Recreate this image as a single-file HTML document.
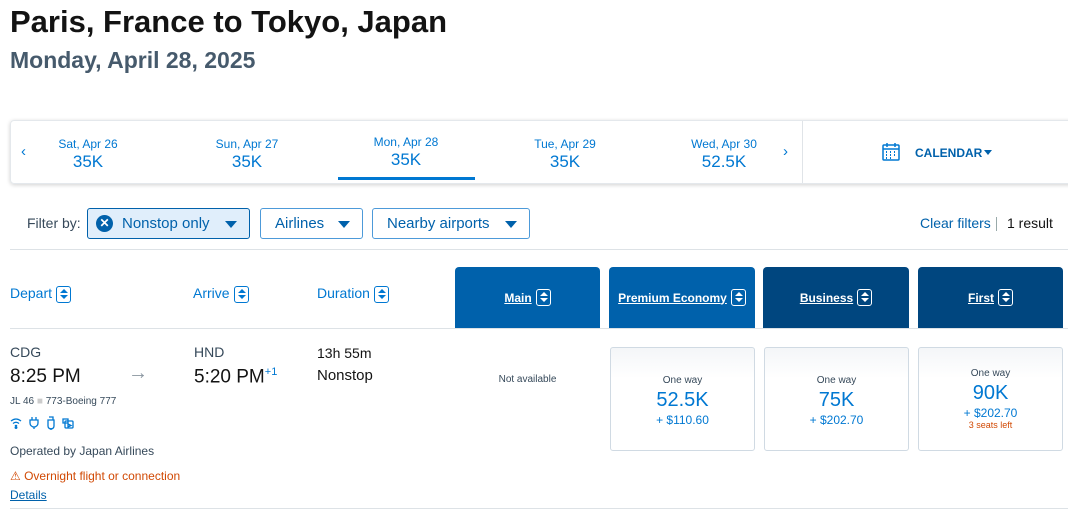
<!DOCTYPE html>
<html><head><style>
*{margin:0;padding:0;box-sizing:border-box}
body{width:1068px;height:513px;overflow:hidden;background:#fff;font-family:"Liberation Sans",sans-serif;position:relative;color:#36495a}
.a{position:absolute}
.blue{color:#0078d2}
.c{text-align:center}
.sort{display:inline-block;width:15px;height:17px;border:1.5px solid #0078d2;border-radius:3px;vertical-align:middle;position:relative;margin-left:4px}
.sort:before{content:"";position:absolute;left:3px;top:2px;border:4px solid transparent;border-bottom:4px solid #0078d2;border-top:0}
.sort:after{content:"";position:absolute;left:3px;top:8px;border:4px solid transparent;border-top:4px solid #0078d2;border-bottom:0}
.sw{border-color:#fff}.sw:before{border-bottom-color:#fff}.sw:after{border-top-color:#fff}
.cab{position:absolute;top:267px;height:61px;border-radius:4px 4px 0 0;color:#fff;font-weight:bold;font-size:12px;text-decoration:underline;display:flex;align-items:center;justify-content:center}
.card{position:absolute;top:347px;height:104px;width:145px;border:1px solid #d0dae3;border-radius:3px;background:linear-gradient(#f4f6f8,#fff 30%);text-align:center}
.card .o{font-size:10px;margin-top:27px}
.card .pr{font-size:20px;margin-top:3px;line-height:22px}
.card .f{font-size:12px;margin-top:2px}
.fb{position:absolute;top:208px;height:31px;border:1px solid #4d9ad9;border-radius:3px;font-size:15px;color:#0061ab;display:flex;align-items:center;padding-left:14px}
.tri{position:absolute;right:12px;top:12px;border:6px solid transparent;border-top:7px solid #0061ab;border-bottom:0}
.d{position:absolute;top:137px;width:150px;text-align:center;color:#0078d2}
.d .s{font-size:12px}.d .p{font-size:17px;margin-top:1px}
</style></head><body>
<div class="a" style="left:10px;top:4px;font-size:31px;font-weight:bold;color:#131313">Paris, France to Tokyo, Japan</div>
<div class="a" style="left:10px;top:47px;font-size:23px;font-weight:bold;color:#465a6c">Monday, April 28, 2025</div>

<div class="a" style="left:10px;top:120px;width:1070px;height:64px;border:1px solid #e4e8ec;border-radius:4px;box-shadow:0 1px 4px rgba(0,0,0,.18)"></div>
<div class="a blue" style="left:21px;top:143px;font-size:15px">‹</div>
<div class="d" style="left:13px"><div class="s">Sat, Apr 26</div><div class="p">35K</div></div>
<div class="d" style="left:172px"><div class="s">Sun, Apr 27</div><div class="p">35K</div></div>
<div class="d" style="left:331px;top:135px"><div class="s">Mon, Apr 28</div><div class="p">35K</div></div>
<div class="d" style="left:490px"><div class="s">Tue, Apr 29</div><div class="p">35K</div></div>
<div class="d" style="left:649px"><div class="s">Wed, Apr 30</div><div class="p">52.5K</div></div>
<div class="a" style="left:338px;top:177px;width:137px;height:3px;background:#0078d2"></div>
<div class="a blue" style="left:783px;top:143px;font-size:15px">›</div>
<div class="a" style="left:802px;top:121px;width:1px;height:62px;background:#e0e4e8"></div>
<svg class="a" style="left:881px;top:142px" width="20" height="20" viewBox="0 0 20 20" fill="none" stroke="#0078d2" stroke-width="1.5"><rect x="2" y="3" width="16" height="15" rx="1"/><line x1="2" y1="7" x2="18" y2="7"/><line x1="6" y1="1" x2="6" y2="5"/><line x1="14" y1="1" x2="14" y2="5"/><g stroke-width="2"><path d="M5 10h1M9 10h1M13 10h1M5 13h1M9 13h1M13 13h1M5 16h1M9 16h1"/></g></svg>
<div class="a" style="left:915px;top:146px;font-size:12px;font-weight:bold;color:#0061ab">CALENDAR</div>
<div class="a" style="left:984px;top:150px;border:4px solid transparent;border-top:5px solid #0061ab;border-bottom:0"></div>

<div class="a" style="left:27px;top:215px;font-size:14px;color:#36495a">Filter by:</div>
<div class="fb" style="left:87px;width:163px;background:#e0eefb;border:1.5px solid #0061ab;padding-left:8px"><span style="display:inline-block;width:17px;height:17px;border-radius:50%;background:#0061ab;color:#fff;font-size:12px;line-height:17px;text-align:center;font-weight:bold;margin-right:9px">✕</span>Nonstop only<span class="tri"></span></div>
<div class="fb" style="left:260px;width:103px">Airlines<span class="tri"></span></div>
<div class="fb" style="left:372px;width:158px">Nearby airports<span class="tri"></span></div>
<div class="a" style="left:920px;top:215px;font-size:14px;color:#0061ab">Clear filters</div>
<div class="a" style="left:996px;top:217px;width:1px;height:14px;background:#9aa"></div>
<div class="a" style="left:1007px;top:215px;font-size:14px;color:#131313">1 result</div>
<div class="a" style="left:10px;top:249px;width:1058px;height:1px;background:#dde2e6"></div>

<div class="a blue" style="left:10px;top:285px;font-size:14px">Depart<span class="sort"></span></div>
<div class="a blue" style="left:193px;top:285px;font-size:14px">Arrive<span class="sort"></span></div>
<div class="a blue" style="left:317px;top:285px;font-size:14px">Duration<span class="sort"></span></div>
<div class="cab" style="left:455px;width:145px;background:#0061ab">Main<span class="sort sw"></span></div>
<div class="cab" style="left:609px;width:146px;background:#0061ab">Premium Economy<span class="sort sw"></span></div>
<div class="cab" style="left:763px;width:146px;background:#00467f">Business<span class="sort sw"></span></div>
<div class="cab" style="left:918px;width:145px;background:#00467f">First<span class="sort sw"></span></div>
<div class="a" style="left:10px;top:328px;width:1058px;height:1px;background:#dde2e6"></div>

<div class="a" style="left:10px;top:344px;font-size:14px">CDG</div>
<div class="a" style="left:10px;top:366px;font-size:19px;color:#131313">8:25 PM</div>
<div class="a" style="left:128px;top:362px;font-size:20px;color:#8a96a0">→</div>
<div class="a" style="left:194px;top:344px;font-size:14px">HND</div>
<div class="a" style="left:194px;top:366px;font-size:19px;color:#131313">5:20 PM<sup style="font-size:11px;color:#0078d2">+1</sup></div>
<div class="a" style="left:317px;top:345px;font-size:14px;color:#131313">13h 55m</div>
<div class="a" style="left:317px;top:367px;font-size:15px;color:#131313">Nonstop</div>
<div class="a" style="left:10px;top:396px;font-size:10px">JL 46 <span style="color:#ccc">■</span> 773-Boeing 777</div>
<svg class="a" style="left:10px;top:416px" width="72" height="14" viewBox="0 0 72 14" fill="none" stroke="#0078d2" stroke-width="1.3">
<path d="M1 5Q6 1 11 5M3 7.5Q6 5 9 7.5M5 10Q6 9 7 10"/><circle cx="6" cy="11.5" r="0.8" fill="#0078d2"/>
<path d="M22 1v3M26 1v3M20 4h8v3a4 4 0 0 1-8 0zM24 11v2"/>
<path d="M39 1h4v3M38 4h6v6a3 3 0 0 1-6 0zM41 12v2"/>
<rect x="55" y="5" width="8" height="7" rx="1"/><path d="M53 3h5v4h-5zM58 8l3 1.5-3 1.5z"/>
</svg>
<div class="a" style="left:10px;top:444px;font-size:12px">Operated by Japan Airlines</div>
<div class="a" style="left:10px;top:469px;font-size:12px;color:#d14904">⚠ Overnight flight or connection</div>
<div class="a" style="left:10px;top:488px;font-size:12px;color:#0061ab;text-decoration:underline">Details</div>
<div class="a" style="left:10px;top:508px;width:1058px;height:1px;background:#dde2e6"></div>

<div class="a c" style="left:455px;top:374px;width:145px;font-size:10px">Not available</div>
<div class="card" style="left:610px"><div class="o">One way</div><div class="blue pr">52.5K</div><div class="blue f">+ $110.60</div></div>
<div class="card" style="left:764px"><div class="o">One way</div><div class="blue pr">75K</div><div class="blue f">+ $202.70</div></div>
<div class="card" style="left:918px"><div class="o" style="margin-top:20px">One way</div><div class="blue pr">90K</div><div class="blue f">+ $202.70</div><div style="font-size:9px;color:#d14904">3 seats left</div></div>
</body></html>
